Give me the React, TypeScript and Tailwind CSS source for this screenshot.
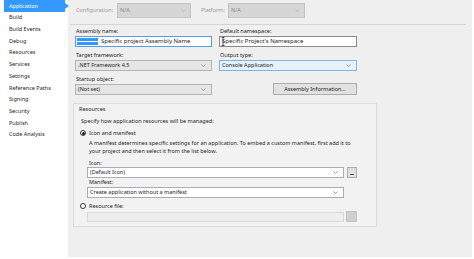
import React from "react";

const navItems = [
  "Application",
  "Build",
  "Build Events",
  "Debug",
  "Resources",
  "Services",
  "Settings",
  "Reference Paths",
  "Signing",
  "Security",
  "Publish",
  "Code Analysis",
];

function Chevron({ color = "#7a7a7a" }: { color?: string }) {
  return (
    <svg width="5" height="3" viewBox="0 0 5 3" className="shrink-0">
      <path d="M0.5 0.5 L2.5 2.5 L4.5 0.5" fill="none" stroke={color} strokeWidth="0.7" />
    </svg>
  );
}

function Field({ label, children }: { label: string; children: React.ReactNode }) {
  return (
    <div className="flex flex-col">
      <div className="h-[8px] leading-[8px] pl-[1px] text-[#1e1e1e]">{label}</div>
      <div className="mt-[1px]">{children}</div>
    </div>
  );
}

function Select({
  value,
  variant = "gray",
}: {
  value: string;
  variant?: "gray" | "hover" | "white";
}) {
  const cls =
    variant === "hover"
      ? "bg-[#e5f1fb] border-[#7eb4ea]"
      : variant === "white"
      ? "bg-white border-[#abadb3]"
      : "bg-[#e5e5e5] border-[#b4b4b4]";
  return (
    <div className={`h-[11px] border flex items-center justify-between pl-[2px] pr-[5px] ${cls}`}>
      <span className="leading-[9px] text-[#1e1e1e]">{value}</span>
      <Chevron />
    </div>
  );
}

function Radio({ checked }: { checked: boolean }) {
  return (
    <div className="w-[6px] h-[6px] rounded-full border border-[#333] bg-white flex items-center justify-center shrink-0">
      {checked && <div className="w-[3px] h-[3px] rounded-full bg-[#222]" />}
    </div>
  );
}

export default function App() {
  return (
    <div
      className="w-[474px] h-[259px] bg-white flex text-[5.5px] overflow-hidden"
      style={{ fontFamily: '"Noto Sans", "Open Sans", sans-serif' }}
    >
      {/* Sidebar */}
      <div className="w-[68px] shrink-0 bg-white flex flex-col">
        {navItems.map((item, i) => (
          <div key={item} className="h-[11.7px] flex items-center relative">
            {i === 0 ? (
              <div className="ml-[4px] w-[61px] h-full bg-[#3399ff] text-white flex items-center pl-[5px] relative">
                {item}
                <div className="absolute right-[-4px] top-[3px] w-0 h-0 border-y-[3px] border-y-transparent border-l-[4px] border-l-[#3399ff]" />
              </div>
            ) : (
              <div className="pl-[9px] text-[#1e1e1e]">{item}</div>
            )}
          </div>
        ))}
      </div>

      {/* Main */}
      <div className="w-[404px] h-[257px] bg-[#efefef] flex flex-col">
        {/* Configuration row */}
        <div className="flex items-center h-[15px] mt-[3px] pl-[8px] text-[#9a9a9a]">
          <span className="w-[41px]">Configuration:</span>
          <div className="w-[74px] h-[15px] bg-[#d6d6d6] border border-[#c4c4c4] flex items-center justify-between pl-[2px] pr-[4px]">
            <span className="text-[#8a8a8a]">N/A</span>
            <Chevron color="#aaaaaa" />
          </div>
          <span className="ml-[10px] w-[27px]">Platform:</span>
          <div className="w-[77px] h-[15px] bg-[#d6d6d6] border border-[#c4c4c4] flex items-center justify-between pl-[2px] pr-[4px]">
            <span className="text-[#8a8a8a]">N/A</span>
            <Chevron color="#aaaaaa" />
          </div>
        </div>

        {/* Separator */}
        <div className="mt-[6px] ml-[2px] w-[396px] h-px bg-[#d4d4d4]" />

        {/* Fields */}
        <div className="ml-[7px] mt-[2px] grid grid-cols-[137px_138px] gap-x-[7px] gap-y-[4px]">
          <Field label="Assembly name:">
            <div className="h-[11px] border border-[#569de5] bg-white flex items-center pl-[1px]">
              <div className="w-[21px] h-[7px] bg-[#3399ff] flex items-center">
                <div className="w-full h-px bg-white" />
              </div>
              <span className="ml-[3px] text-[6px] leading-[9px] text-[#1e1e1e]">
                Specific project Assembly Name
              </span>
            </div>
          </Field>
          <Field label="Default namespace:">
            <div className="h-[11px] border border-[#8a8a8a] bg-white flex items-center pl-[2px] relative">
              <span className="text-[6px] leading-[9px] text-[#1e1e1e]">Specific Project's Namespace</span>
              <svg width="4" height="9" viewBox="0 0 4 9" className="absolute left-[1px] top-[0px]">
                <path d="M0.5 0.5 H3.5 M2 0.5 V8.5 M0.5 8.5 H3.5" stroke="#111" strokeWidth="0.7" fill="none" />
              </svg>
            </div>
          </Field>
          <Field label="Target framework:">
            <Select value=".NET Framework 4.5" />
          </Field>
          <Field label="Output type:">
            <Select value="Console Application" variant="hover" />
          </Field>
          <Field label="Startup object:">
            <Select value="(Not set)" />
          </Field>
          <div className="flex items-end justify-end">
            <div className="w-[84px] h-[12px] bg-[#e1e1e1] border border-[#adadad] flex items-center justify-center text-[#1e1e1e]">
              Assembly Information...
            </div>
          </div>
        </div>

        {/* Resources group */}
        <div className="ml-[5px] mt-[8px] w-[304px] h-[124px] border border-[#dcdcdc] bg-[#f2f2f2] flex flex-col text-[#1e1e1e]">
          <div className="pl-[5px] mt-[1px] h-[8px] leading-[8px]">Resources</div>
          <div className="pl-[7px] mt-[4px] h-[8px] leading-[8px]">
            Specify how application resources will be managed:
          </div>
          <div className="pl-[6px] mt-[4px] h-[8px] flex items-center gap-[3px]">
            <Radio checked />
            <span className="leading-[8px]">Icon and manifest</span>
          </div>
          <div className="pl-[15px] mt-[2px] leading-[8px]">
            A manifest determines specific settings for an application. To embed a custom manifest, first add it to
            <br />
            your project and then select it from the list below.
          </div>
          <div className="pl-[15px] mt-[4px] h-[8px] leading-[8px]">Icon:</div>
          <div className="pl-[13px] flex items-center gap-[3px]">
            <div className="w-[257px]">
              <Select value="(Default Icon)" variant="white" />
            </div>
            <div className="w-[10px] h-[11px] border border-[#adadad] bg-[#e1e1e1] flex items-end justify-center pb-[2px]">
              <div className="w-[4px] h-px bg-[#555]" />
            </div>
          </div>
          <div className="pl-[15px] h-[8px] leading-[8px]">Manifest:</div>
          <div className="pl-[13px] mt-[1px] w-[270px]">
            <Select value="Create application without a manifest" variant="white" />
          </div>
          <div className="pl-[6px] mt-[4px] h-[8px] flex items-center gap-[3px]">
            <Radio checked={false} />
            <span className="leading-[8px]">Resource file:</span>
          </div>
          <div className="pl-[13px] mt-[1px] flex items-center gap-[2px]">
            <div className="w-[257px] h-[10px] border border-[#d9d9d9] bg-[#eeeeee]" />
            <div className="w-[11px] h-[11px] bg-[#cfcfcf] border border-[#c4c4c4]" />
          </div>
        </div>
      </div>
    </div>
  );
}
